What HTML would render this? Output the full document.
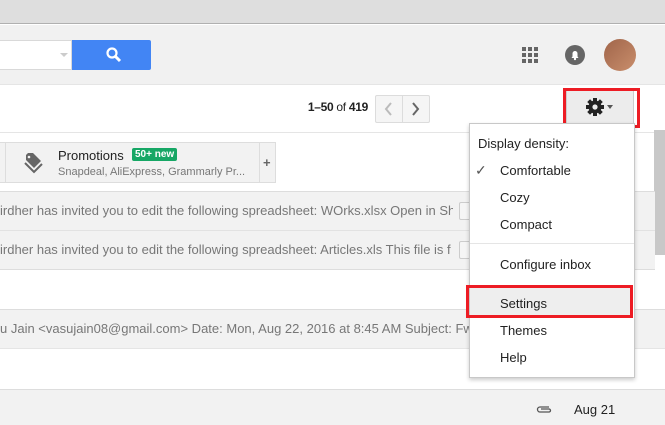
<!DOCTYPE html>
<html><head><style>
*{margin:0;padding:0;box-sizing:border-box}
body{width:665px;height:425px;overflow:hidden;background:#fff;font-family:"Liberation Sans",Arial,sans-serif;position:relative;font-size:13px}
.a{position:absolute}
.t{white-space:nowrap}
</style></head><body>
<div class="a" style="left:0;top:0;width:665px;height:24px;background:#dedede;border-bottom:1px solid #b0b0b0"></div>
<div class="a" style="left:0;top:25px;width:665px;height:60px;background:#f1f1f1;border-bottom:1px solid #e5e5e5"></div>
<div class="a" style="left:0;top:40px;width:72px;height:30px;background:#fff;border:1px solid #d9d9d9;border-left:none"></div>
<div class="a" style="left:60px;top:53px;width:0;height:0;border-left:4px solid transparent;border-right:4px solid transparent;border-top:4px solid #ccc"></div>
<div class="a" style="left:72px;top:40px;width:79px;height:30px;background:#4285f4;border-radius:0 2px 2px 0"></div>
<svg class="a" style="left:105px;top:46px" width="18" height="18" viewBox="0 0 18 18"><circle cx="7" cy="7" r="4.5" fill="none" stroke="#fff" stroke-width="2.2"/><path d="M10 10 L15 15" stroke="#fff" stroke-width="3"/></svg>
<svg class="a" style="left:522px;top:47px" width="16" height="16"><g fill="#666"><rect x="0" y="0" width="4" height="4"/><rect x="6" y="0" width="4" height="4"/><rect x="12" y="0" width="4" height="4"/><rect x="0" y="6" width="4" height="4"/><rect x="6" y="6" width="4" height="4"/><rect x="12" y="6" width="4" height="4"/><rect x="0" y="12" width="4" height="4"/><rect x="6" y="12" width="4" height="4"/><rect x="12" y="12" width="4" height="4"/></g></svg>
<svg class="a" style="left:565px;top:45px" width="20" height="20"><circle cx="10" cy="10" r="10" fill="#666"/><path d="M6.5 13 L13.5 13 L12.5 11.5 L12.5 8.5 A2.5 2.5 0 0 0 7.5 8.5 L7.5 11.5 Z" fill="#fff"/><circle cx="10" cy="14" r="1.2" fill="#fff"/></svg>
<div class="a" style="left:604px;top:39px;width:32px;height:32px;border-radius:50%;background:linear-gradient(135deg,#a0654a,#c98e6c)"></div>

<div class="a t" style="left:268px;width:100px;text-align:right;top:100px;font-size:12px;color:#222;letter-spacing:-0.3px"><b>1–50</b> of <b>419</b></div>
<div class="a" style="left:375px;top:95px;width:55px;height:28px;border:1px solid #dcdcdc;background:#f5f5f5;border-radius:2px"></div>
<div class="a" style="left:402px;top:95px;width:1px;height:28px;background:#dcdcdc"></div>
<svg class="a" style="left:383px;top:101px" width="12" height="16"><path d="M8 2 L3 8 L8 14" fill="none" stroke="#bbb" stroke-width="2"/></svg>
<svg class="a" style="left:410px;top:101px" width="12" height="16"><path d="M3 2 L8 8 L3 14" fill="none" stroke="#666" stroke-width="2"/></svg>

<div class="a" style="left:566px;top:90px;width:68px;height:35px;background:#ececec;border:1px solid #ccc"></div>
<svg class="a" style="left:585px;top:97px" width="20" height="20" viewBox="0 0 20 20"><g fill="#222" transform="translate(10 10)"><rect x="-2" y="-9" width="4" height="18"/><rect x="-2" y="-9" width="4" height="18" transform="rotate(45)"/><rect x="-2" y="-9" width="4" height="18" transform="rotate(90)"/><rect x="-2" y="-9" width="4" height="18" transform="rotate(135)"/><circle r="6.5"/><circle r="2.6" fill="#ececec"/></g></svg>
<div class="a" style="left:607px;top:105px;width:0;height:0;border-left:3.5px solid transparent;border-right:3.5px solid transparent;border-top:4px solid #555"></div>
<div class="a" style="left:563px;top:88px;width:77px;height:40px;border:3px solid #ed1c24"></div>

<div class="a" style="left:0;top:132px;width:655px;height:1px;background:#e5e5e5"></div>
<div class="a" style="left:654px;top:130px;width:11px;height:125px;background:#c8c8c8"></div>
<div class="a" style="left:0;top:142px;width:275px;height:41px;background:#f2f2f2;border-top:1px solid #ddd;border-bottom:1px solid #ddd"></div>
<div class="a" style="left:5px;top:142px;width:1px;height:41px;background:#ddd"></div>
<div class="a" style="left:259px;top:142px;width:1px;height:41px;background:#ddd"></div>
<div class="a" style="left:275px;top:142px;width:1px;height:41px;background:#ddd"></div>
<svg class="a" style="left:24px;top:152px" width="20" height="22" viewBox="0 0 20 22"><path d="M2 3 L2 8 L10 16 L17 9 L9 1 L4 1 Z" fill="#666"/><circle cx="5" cy="5" r="1.3" fill="#f2f2f2"/><path d="M1 11 L10 20 L18 12" fill="none" stroke="#666" stroke-width="2"/></svg>
<div class="a t" style="left:58px;top:148px;font-size:13px;color:#222">Promotions</div>
<div class="a t" style="left:132px;top:148px;background:#16a765;color:#fff;font-size:10px;font-weight:bold;padding:1px 3px;border-radius:2px">50+ new</div>
<div class="a t" style="left:58px;top:166px;font-size:11px;color:#777">Snapdeal, AliExpress, Grammarly Pr...</div>
<div class="a t" style="left:263px;top:155px;font-size:13px;color:#666;font-weight:bold">+</div>

<div class="a" style="left:0;top:191px;width:655px;height:79px;background:#f2f2f2;border-top:1px solid #ddd;border-bottom:1px solid #ddd"></div>
<div class="a" style="left:0;top:230px;width:655px;height:1px;background:#e2e2e2"></div>
<div class="a t" style="left:0;top:203px;width:453px;overflow:hidden;font-size:13px;color:#777">irdher has invited you to edit the following spreadsheet: WOrks.xlsx Open in Sheets</div>
<div class="a t" style="left:0;top:242px;width:451px;overflow:hidden;font-size:13px;color:#777">irdher has invited you to edit the following spreadsheet: Articles.xls This file is from</div>
<div class="a" style="left:459px;top:202px;width:20px;height:18px;border:1px solid #ccc;border-radius:2px;background:#f5f5f5"></div>
<div class="a" style="left:459px;top:241px;width:20px;height:18px;border:1px solid #ccc;border-radius:2px;background:#f5f5f5"></div>

<div class="a" style="left:0;top:309px;width:665px;height:40px;background:#f2f2f2;border-top:1px solid #ddd;border-bottom:1px solid #e5e5e5"></div>
<div class="a t" style="left:0;top:321px;font-size:13px;color:#777">u Jain &lt;vasujain08@gmail.com&gt; Date: Mon, Aug 22, 2016 at 8:45 AM Subject: Fw</div>
<div class="a" style="left:0;top:389px;width:665px;height:36px;background:#f2f2f2;border-top:1px solid #ddd"></div>
<svg class="a" style="left:536px;top:404px" width="16" height="10"><path d="M13 3 L4 3 A2.5 2.5 0 0 0 4 8 L13 8 A1.5 1.5 0 0 0 13 5 L5 5" fill="none" stroke="#555" stroke-width="1.3"/></svg>
<div class="a t" style="left:574px;top:402px;font-size:13px;color:#222">Aug 21</div>

<div class="a" style="left:469px;top:123px;width:166px;height:255px;background:#fff;border:1px solid #c8c8c8;box-shadow:0 2px 4px rgba(0,0,0,.2)"></div>
<div class="a t" style="left:478px;top:136px;font-size:13px;color:#222">Display density:</div>
<div class="a t" style="left:475px;top:162px;font-size:14px;color:#555">✓</div>
<div class="a t" style="left:500px;top:163px;font-size:13px;color:#222">Comfortable</div>
<div class="a t" style="left:500px;top:190px;font-size:13px;color:#222">Cozy</div>
<div class="a t" style="left:500px;top:217px;font-size:13px;color:#222">Compact</div>
<div class="a" style="left:470px;top:243px;width:164px;height:1px;background:#e5e5e5"></div>
<div class="a t" style="left:500px;top:257px;font-size:13px;color:#222">Configure inbox</div>
<div class="a" style="left:470px;top:287px;width:161px;height:30px;background:#eee"></div>
<div class="a t" style="left:500px;top:296px;font-size:13px;color:#222">Settings</div>
<div class="a t" style="left:500px;top:323px;font-size:13px;color:#222">Themes</div>
<div class="a t" style="left:500px;top:350px;font-size:13px;color:#222">Help</div>
<div class="a" style="left:466px;top:285px;width:167px;height:33px;border:3px solid #ed1c24"></div>
</body></html>
